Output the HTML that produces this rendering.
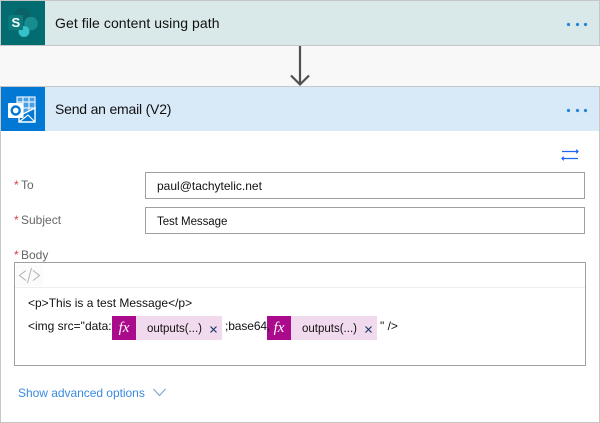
<!DOCTYPE html>
<html><head><meta charset="utf-8">
<style>
html,body{margin:0;padding:0;background:#f8f8f8}
#p{position:relative;width:600px;height:423px;overflow:hidden;background:#f8f8f8;font-family:"Liberation Sans",sans-serif;color:#111}
#p div,#p svg{position:absolute}
.t{white-space:nowrap;line-height:16px}
.box{background:#fff;border:1px solid #a0a0a0;box-sizing:border-box}
.d{width:3px;height:3px;background:#1a80d8;border-radius:50%;box-shadow:0 0 1px #6fb4ec}
.lab{font-size:12px;color:#666}
.st{font-size:12px;color:#e0394a}
.fx{font:italic 15px/18px 'Liberation Serif',serif;color:#fff;text-align:center;width:24px}
</style></head><body><div id="p">
<!-- card 1 -->
<div style="left:0;top:0;width:600px;height:46px;background:#d9e8e8;border:1px solid #c6c6c6;box-sizing:border-box"></div>
<div style="left:1px;top:1px;width:44px;height:44px;background:#036c70"></div>
<svg style="left:1px;top:1px" width="44" height="44" viewBox="0 0 44 44">
<circle cx="21.500" cy="15.500" r="8.500" fill="#0a6266"/>
<circle cx="30" cy="22.500" r="6.800" fill="#178d91"/>
<circle cx="23" cy="30.500" r="5.500" fill="#37c0c8"/>
<rect x="7.500" y="14" width="14.500" height="15" rx="1" fill="#0b7b7e"/>
<text x="14.800" y="26" font-family="Liberation Sans" font-size="13" font-weight="bold" fill="#fff" text-anchor="middle">S</text>
</svg>
<div class="t" style="left:55px;top:15px;font-size:14px;letter-spacing:.07px">Get file content using path</div>
<div class="d" style="left:567px;top:23px"></div><div class="d" style="left:576px;top:23px"></div><div class="d" style="left:584px;top:23px"></div>
<!-- arrow -->
<svg style="left:270px;top:40px" width="60" height="50" viewBox="0 0 60 50"><path d="M30 6V44M21 35.500L30 44.500L39 35.500" fill="none" stroke="#505050" stroke-width="2.200"/></svg>
<!-- card 2 -->
<div style="left:0;top:86px;width:600px;height:337px;background:#fff;border:1px solid #c6c6c6;box-sizing:border-box"></div>
<div style="left:1px;top:87px;width:598px;height:44px;background:#d8e9f8"></div>
<div style="left:1px;top:87px;width:44px;height:44px;background:#0078d4"></div>
<svg style="left:1px;top:87px" width="44" height="44" viewBox="0 0 44 44">
<rect x="16" y="10" width="18" height="17" fill="#4a9fe2" stroke="#e8f3fc" stroke-width="1.200"/>
<path d="M16 15H34M16 21H34M22 10V27M28 10V27" fill="none" stroke="#e8f3fc" stroke-width="1.200"/>
<path d="M18 35V29L34 21V35Z" fill="#0078d4" stroke="#fff" stroke-width="1.400"/>
<path d="M18 35L27 28L34 35" fill="none" stroke="#fff" stroke-width="1.200"/>
<rect x="7" y="16" width="15.500" height="15" rx="1" fill="#fff"/>
<circle cx="14.700" cy="23.500" r="4" fill="none" stroke="#0078d4" stroke-width="2.400"/>
</svg>
<div class="t" style="left:55px;top:101px;font-size:14px;letter-spacing:-.2px">Send an email (V2)</div>
<div class="d" style="left:567px;top:109px"></div><div class="d" style="left:576px;top:109px"></div><div class="d" style="left:584px;top:109px"></div>
<!-- swap -->
<svg style="left:555px;top:140px" width="45" height="30" viewBox="0 0 45 30"><path d="M7 11.500H23M21.200 9.700L23 11.500L21.200 13.300M23 18.500H7M8.800 16.700L7 18.500L8.800 20.300" fill="none" stroke="#1a66f5" stroke-width="1.200"/></svg>
<!-- To -->
<div class="st t" style="left:14px;top:177px">*</div><div class="lab t" style="left:21px;top:177px">To</div>
<div class="box" style="left:145px;top:172px;width:440px;height:27px"></div>
<div class="t" style="left:157px;top:178px;font-size:12px">paul@tachytelic.net</div>
<!-- Subject -->
<div class="st t" style="left:14px;top:212px">*</div><div class="lab t" style="left:21px;top:212px">Subject</div>
<div class="box" style="left:145px;top:207px;width:440px;height:27px"></div>
<div class="t" style="left:157px;top:214px;font-size:11.500px;letter-spacing:-.05px">Test Message</div>
<!-- Body -->
<div class="st t" style="left:14px;top:247px">*</div><div class="lab t" style="left:21px;top:247px">Body</div>
<div class="box" style="left:14px;top:262px;width:572px;height:104px"></div>
<div style="left:15px;top:287px;width:570px;height:1px;background:#eee"></div>
<div style="left:16px;top:265px;width:27px;height:21px;background:#fbfbfb"></div>
<svg style="left:16px;top:265px" width="28" height="22" viewBox="0 0 28 22"><path d="M10 5.500L3.500 10.500L10 15.500M17 5.500L23.500 10.500L17 15.500M15.500 3L11.500 18" fill="none" stroke="#b0b0b0" stroke-width="1"/></svg>
<div class="t" style="left:28px;top:295px;font-size:12px">&lt;p&gt;This is a test Message&lt;/p&gt;</div>
<div class="t" style="left:28px;top:318px;font-size:12px;width:84px;overflow:hidden">&lt;img src="data:</div>
<!-- token 1 -->
<div style="left:112px;top:316px;width:110px;height:24px;background:#f1daee"></div>
<div style="left:112px;top:316px;width:24px;height:24px;background:#aa0a8c"></div>
<div class="t fx" style="left:112px;top:319px">fx</div>
<div class="t" style="left:147px;top:321px;font-size:11.500px">outputs(...)</div>
<svg style="left:209px;top:325px" width="9" height="9" viewBox="0 0 9 9"><path d="M1.500 1.500L7.500 7.500M7.500 1.500L1.500 7.500" stroke="#1a3a68" stroke-width="1.200"/></svg>
<!-- token 2 -->
<div style="left:267px;top:316px;width:110px;height:24px;background:#f1daee"></div>
<div style="left:267px;top:316px;width:24px;height:24px;background:#aa0a8c"></div>
<div class="t fx" style="left:267px;top:319px">fx</div>
<div class="t" style="left:302px;top:321px;font-size:11.500px">outputs(...)</div>
<svg style="left:364px;top:325px" width="9" height="9" viewBox="0 0 9 9"><path d="M1.500 1.500L7.500 7.500M7.500 1.500L1.500 7.500" stroke="#1a3a68" stroke-width="1.200"/></svg>
<div class="t" style="left:225px;top:318px;font-size:12px;letter-spacing:-.1px">;base64,</div>
<div class="t" style="left:380px;top:318px;font-size:12px">" /&gt;</div>
<!-- advanced -->
<div class="t" style="left:18px;top:385px;font-size:12px;letter-spacing:-.03px;color:#3a8ae0">Show advanced options</div>
<svg style="left:152px;top:387px" width="15" height="11" viewBox="0 0 15 11"><path d="M1.500 2L7.500 8.500L13.500 2" fill="none" stroke="#7a9cc4" stroke-width="1"/></svg>
</div></body></html>
